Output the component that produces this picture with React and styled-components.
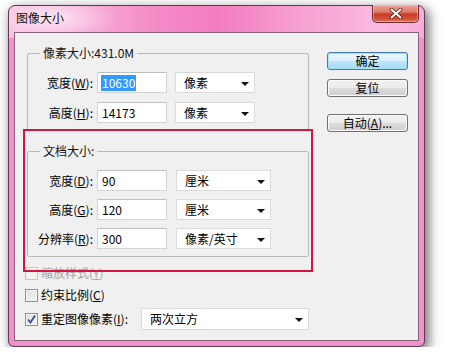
import React from "react";
import styled, { createGlobalStyle } from "styled-components";

const Global = createGlobalStyle`
  body {
    margin: 0;
    background: #ffffff;
    font-family: "Noto Sans CJK SC", "Noto Sans", sans-serif;
    font-size: 12px;
    color: #000;
  }
`;

const Window = styled.div`
  box-sizing: border-box;
  margin: 5px 0 0 8px;
  width: 417px;
  height: 342px;
  border: 1px solid #5e3a54;
  border-radius: 7px 7px 6px 6px;
  background:
    radial-gradient(ellipse 70px 22px at 40px 12px, rgba(255, 235, 246, 0.9), rgba(255, 235, 246, 0) 100%),
    linear-gradient(90deg, #f8bde0 0%, #f7b0da 15%, #f48cc8 35%, #f37cc0 50%, #f6a0d2 70%, #fab9e0 88%, #f7acd8 100%) top / 100% 32px no-repeat,
    #f190ca;
  box-shadow: 3px 4px 12px 1px rgba(0, 0, 0, 0.55);
  display: flex;
  flex-direction: column;
`;

const TitleBar = styled.div`
  height: 26px;
  display: flex;
  align-items: flex-start;
  justify-content: space-between;
  padding: 0 5px 0 7px;
`;

const Title = styled.div`
  margin-top: 4px;
  line-height: 16px;
  color: #111;
`;

const CloseButton = styled.div`
  box-sizing: border-box;
  margin-top: -1px;
  width: 47px;
  height: 18px;
  border: 1px solid #6e2a2a;
  border-top: none;
  border-radius: 0 0 5px 5px;
  background: linear-gradient(180deg, #e9a293 0%, #df7d6c 40%, #c83a28 55%, #d4553f 85%, #e07a62 100%);
  box-shadow: inset 0 0 0 1px rgba(255, 220, 210, 0.45);
  display: flex;
  align-items: center;
  justify-content: center;
`;

const Client = styled.div`
  box-sizing: border-box;
  margin: 0 5px;
  height: 309px;
  border: 1px solid #86627a;
  background: #f0f0f0;
  display: flex;
`;

const LeftColumn = styled.div`
  padding-left: 12px;
  width: 282px;
  display: flex;
  flex-direction: column;
`;

const RightColumn = styled.div`
  margin-left: 18px;
  margin-top: 19px;
  display: flex;
  flex-direction: column;
`;

const Group = styled.fieldset`
  box-sizing: border-box;
  margin: ${p => p.$top}px 0 0;
  padding: 11px 0 ${p => p.$bottom}px 0;
  width: 282px;
  border: 1px solid #b9b9b9;
  border-radius: 2px;
  display: flex;
  flex-direction: column;
  gap: ${p => p.$gap}px;
`;

const Legend = styled.legend`
  margin-left: 12px;
  padding: 0 3px;
  line-height: 16px;
  color: #111;
`;

const Marked = styled.div`
  position: relative;
  &::after {
    content: "";
    position: absolute;
    top: -1px;
    left: -4px;
    right: -4px;
    bottom: -15px;
    border: 2px solid #d2163f;
    pointer-events: none;
  }
`;

const Row = styled.div`
  display: flex;
  align-items: center;
  height: 21px;
`;

const Label = styled.div`
  width: 65px;
  margin-right: 4px;
  text-align: right;
  line-height: 16px;
  white-space: nowrap;
`;

const Field = styled.div`
  box-sizing: border-box;
  width: 70px;
  height: 21px;
  padding-left: 4px;
  border: 1px solid #d4d4d4;
  border-top-color: #bfbfbf;
  background: #fff;
  display: flex;
  align-items: center;
  line-height: 16px;
`;

const Selected = styled.span`
  background: #3399ff;
  color: #fff;
  padding: 0 1px;
  margin-left: -1px;
`;

const Select = styled.div`
  box-sizing: border-box;
  flex-shrink: 0;
  width: ${p => p.$w}px;
  height: ${p => p.$h || 21}px;
  margin-left: ${p => p.$ml}px;
  padding: 0 5px 0 8px;
  border: 1px solid #dadada;
  background: #fff;
  display: flex;
  align-items: center;
  justify-content: space-between;
  line-height: 16px;
`;

const Arrow = styled.span`
  width: 0;
  height: 0;
  border-left: 4px solid transparent;
  border-right: 4px solid transparent;
  border-top: 4px solid #111;
  margin-top: 2px;
`;

const CheckRow = styled.div`
  display: flex;
  align-items: center;
  height: ${p => p.$h}px;
  margin-top: ${p => p.$mt}px;
  margin-left: -2px;
  color: ${p => (p.$disabled ? "#a3a3a3" : "#000")};
  line-height: 16px;
  white-space: nowrap;
`;

const Box = styled.span`
  box-sizing: border-box;
  flex-shrink: 0;
  width: 13px;
  height: 13px;
  margin-right: 3px;
  border: 1px solid ${p => (p.$disabled ? "#c8c8c8" : "#8e8f8f")};
  background: ${p => (p.$disabled ? "#f4f4f4" : "linear-gradient(135deg, #dcdcdc 0%, #f6f6f6 100%)")};
  box-shadow: inset 0 0 0 1px ${p => (p.$disabled ? "#f0f0f0" : "#f4f4f4")};
  display: flex;
  align-items: center;
  justify-content: center;
`;

const Button = styled.div`
  box-sizing: border-box;
  width: 81px;
  height: 18px;
  margin-top: ${p => p.$mt}px;
  border: 1px solid ${p => (p.$primary ? "#3d7bad" : "#707070")};
  border-radius: 3px;
  background: ${p =>
    p.$primary
      ? "linear-gradient(180deg, #eaf6fd 0%, #d9f0fc 50%, #bee6fd 51%, #a7d9f5 100%)"
      : "linear-gradient(180deg, #f2f2f2 0%, #ebebeb 50%, #dddddd 51%, #cfcfcf 100%)"};
  box-shadow: inset 0 0 0 1px ${p => (p.$primary ? "#a6e1f8" : "#fbfbfb")};
  display: flex;
  align-items: center;
  justify-content: center;
  line-height: 16px;
`;

function Check() {
  return (
    <svg width="11" height="11" viewBox="0 0 11 11">
      <path d="M2 5.5 L4.5 8.5 L9 1.5" fill="none" stroke="#2b4f9e" strokeWidth="1.8" />
    </svg>
  );
}

function CloseX() {
  return (
    <svg width="14" height="11" viewBox="0 0 14 11">
      <path d="M2.5 1.5 L11.5 9.5 M11.5 1.5 L2.5 9.5" stroke="#5a1a14" strokeWidth="3.6" strokeLinecap="round" />
      <path d="M2.5 1.5 L11.5 9.5 M11.5 1.5 L2.5 9.5" stroke="#fff" strokeWidth="2" strokeLinecap="round" />
    </svg>
  );
}

export default function App() {
  return (
    <>
      <Global />
      <Window>
        <TitleBar>
          <Title>图像大小</Title>
          <CloseButton>
            <CloseX />
          </CloseButton>
        </TitleBar>
        <Client>
          <LeftColumn>
            <Group $top={12} $bottom={6} $gap={9}>
              <Legend>像素大小:431.0M</Legend>
              <Row>
                <Label>宽度(<u>W</u>):</Label>
                <Field><Selected>10630</Selected></Field>
                <Select $w={80} $ml={8}>像素<Arrow /></Select>
              </Row>
              <Row>
                <Label>高度(<u>H</u>):</Label>
                <Field>14173</Field>
                <Select $w={80} $ml={8}>像素<Arrow /></Select>
              </Row>
            </Group>
            <Marked>
              <Group $top={13} $bottom={7} $gap={8}>
                <Legend>文档大小:</Legend>
                <Row>
                  <Label>宽度(<u>D</u>):</Label>
                  <Field>90</Field>
                  <Select $w={95} $ml={9}>厘米<Arrow /></Select>
                </Row>
                <Row>
                  <Label>高度(<u>G</u>):</Label>
                  <Field>120</Field>
                  <Select $w={95} $ml={9}>厘米<Arrow /></Select>
                </Row>
                <Row>
                  <Label>分辨率(<u>R</u>):</Label>
                  <Field>300</Field>
                  <Select $w={95} $ml={9}>像素/英寸<Arrow /></Select>
                </Row>
              </Group>
            </Marked>
            <CheckRow $h={16} $mt={8} $disabled>
              <Box $disabled />
              缩放样式(<u>Y</u>)
            </CheckRow>
            <CheckRow $h={16} $mt={6}>
              <Box />
              约束比例(<u>C</u>)
            </CheckRow>
            <CheckRow $h={22} $mt={5}>
              <Box><Check /></Box>
              重定图像像素(<u>I</u>):
              <Select $w={168} $h={22} $ml={13}>两次立方<Arrow /></Select>
            </CheckRow>
          </LeftColumn>
          <RightColumn>
            <Button $primary $mt={0}>确定</Button>
            <Button $mt={9}>复位</Button>
            <Button $mt={17}>自动(<u>A</u>)...</Button>
          </RightColumn>
        </Client>
      </Window>
    </>
  );
}
